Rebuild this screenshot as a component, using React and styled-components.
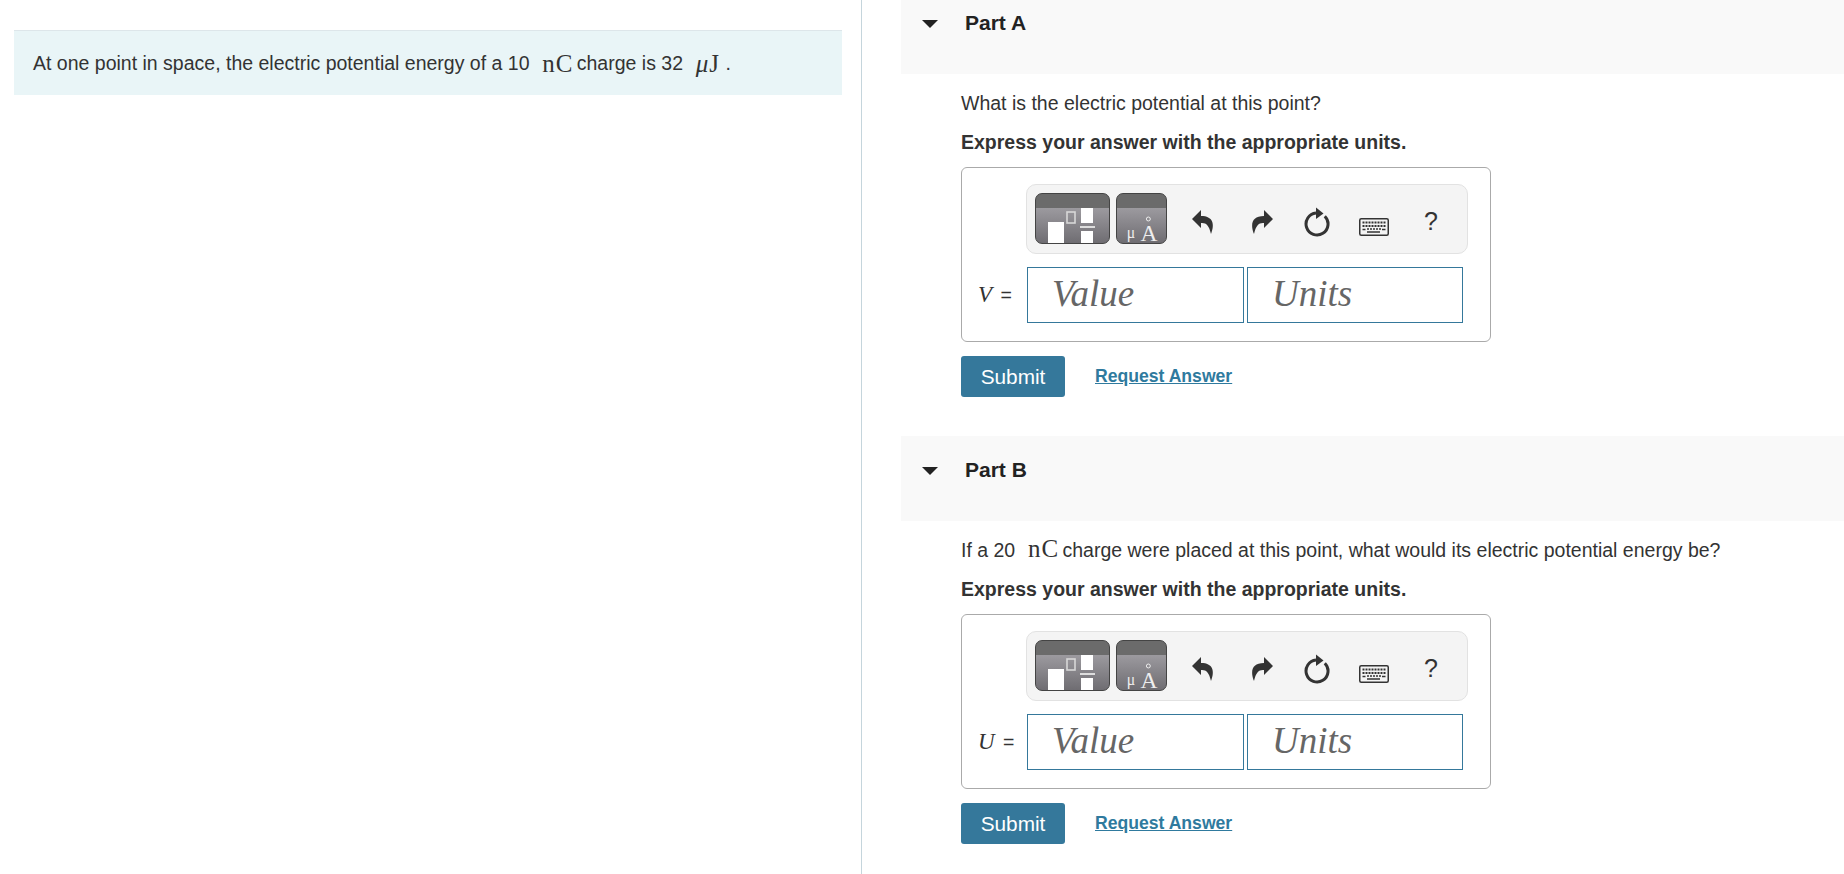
import React from 'react';
import styled, { createGlobalStyle } from 'styled-components';

const GlobalStyle = createGlobalStyle`
  html, body {
    margin: 0;
    padding: 0;
    background: #fff;
    overflow: hidden;
  }
  body {
    font-family: "Liberation Sans", Arial, sans-serif;
    color: #333;
  }
`;

const Page = styled.div`
  display: flex;
  width: 1844px;
  height: 874px;
  overflow: hidden;
`;

const LeftPane = styled.div`
  width: 862px;
  height: 100%;
  flex: none;
  box-sizing: border-box;
  padding: 30px 19px 0 14px;
  border-right: 1px solid #c5d5dc;
`;

const Intro = styled.div`
  height: 65px;
  box-sizing: border-box;
  display: flex;
  align-items: center;
  padding: 1px 19px 0;
  background: #e9f5f7;
  border-top: 1px solid #dde6ea;
  font-size: 19.5px;
  white-space: pre;
`;

const RightPane = styled.div`
  flex: 1;
  padding-left: 39px;
  margin-top: -11px;
`;

const PartHeader = styled.div`
  height: 85px;
  box-sizing: border-box;
  display: flex;
  align-items: flex-start;
  padding: 22px 0 0 21px;
  background: #f9f9f9;
`;

const Caret = styled.span`
  width: 0;
  height: 0;
  margin: 9px 27px 0 0;
  border-left: 8px solid transparent;
  border-right: 8px solid transparent;
  border-top: 8px solid #222;
`;

const PartTitle = styled.h2`
  margin: 0;
  font-size: 21px;
  line-height: 24px;
  font-weight: 700;
  color: #222;
`;

const PartBody = styled.div`
  padding: 16px 0 39px 60px;
`;

const Question = styled.p`
  margin: 0;
  font-size: 19.5px;
  line-height: 26px;
  white-space: pre;
`;

const Instruction = styled.p`
  margin: 13px 0 0;
  font-size: 19.5px;
  line-height: 26px;
  font-weight: 700;
`;

const MathText = styled.span`
  font-family: "Liberation Serif", "Times New Roman", serif;
  font-size: 25px;
  line-height: 0;
  letter-spacing: 1px;
  margin-right: ${(p) => (p.$tight ? '-2px' : '0')};
  font-style: ${(p) => (p.$italic ? 'italic' : 'normal')};
`;

const AnswerBox = styled.div`
  width: 530px;
  height: 175px;
  box-sizing: border-box;
  margin-top: 12px;
  padding: 16px 0 0 65px;
  border: 1px solid #aaa;
  border-radius: 6px;
`;

const Toolbar = styled.div`
  width: 442px;
  height: 70px;
  margin-left: -1px;
  box-sizing: border-box;
  display: flex;
  align-items: flex-start;
  padding: 8px 0 0 8px;
  background: #f4f4f4;
  border: 1px solid #e2e2e2;
  border-radius: 10px;
`;

const PaletteButton = styled.div`
  width: ${(p) => p.$width}px;
  height: 51px;
  flex: none;
  margin-right: ${(p) => p.$gap}px;
  box-sizing: border-box;
  border: 1px solid #444;
  border-radius: 7px;
  background: linear-gradient(#6b6b6b 0, #6b6b6b 14px, #9c9a9f 14px, #6f6d72 100%);
`;

const PaletteSvg = styled.svg`
  display: block;
  width: 100%;
  height: 100%;
  overflow: visible;
`;

const ToolSlot = styled.div`
  width: ${(p) => p.$width}px;
  height: 40px;
  margin-top: ${(p) => p.$top}px;
  flex: none;
  display: flex;
  align-items: center;
  justify-content: center;
  color: #333;
`;

const HelpMark = styled.span`
  font-size: 25px;
  color: #333;
`;

const FieldRow = styled.div`
  position: relative;
  display: flex;
  gap: 3px;
  margin-top: 13px;
`;

const Symbol = styled.span`
  position: absolute;
  left: -49px;
  top: 13px;
  font-size: 19.5px;
  line-height: 30px;
  white-space: pre;
`;

const SymbolLetter = styled.span`
  margin-right: 3px;
  font-family: "Liberation Serif", serif;
  font-style: italic;
  font-size: 23px;
`;

const Field = styled.div`
  width: ${(p) => p.$width}px;
  height: 56px;
  box-sizing: border-box;
  padding-left: 24px;
  border: 1px solid #35789b;
  font-family: "Liberation Serif", serif;
  font-style: italic;
  font-size: 37px;
  line-height: 52px;
  color: #666;
`;

const Actions = styled.div`
  display: flex;
  align-items: center;
  margin-top: 14px;
`;

const SubmitButton = styled.button`
  width: 104px;
  height: 41px;
  padding: 0;
  border: 0;
  border-radius: 3px;
  background: #35789b;
  color: #fff;
  font-family: inherit;
  font-size: 20.8px;
`;

const RequestLink = styled.a`
  margin-left: 30px;
  font-size: 17.6px;
  font-weight: 700;
  color: #2f7a9e;
  text-decoration: underline;
`;

const MatrixIcon = () => (
  <PaletteSvg viewBox="0 0 73 49">
    <rect x="12" y="28" width="16" height="21" fill="#fff" />
    <rect x="31" y="18" width="8" height="11" fill="none" stroke="#d8d8d8" strokeWidth="1.6" />
    <rect x="45" y="14" width="12" height="15" fill="#fff" />
    <rect x="44" y="32" width="15" height="2" fill="#ddd" />
    <rect x="45" y="37" width="12" height="12" fill="#fff" />
  </PaletteSvg>
);

const UnitsIcon = () => (
  <PaletteSvg viewBox="0 0 50 49">
    <text x="10" y="44" fontFamily="Liberation Serif, serif" fontSize="16" fill="#eee">μ</text>
    <text x="24" y="47" fontFamily="Liberation Serif, serif" fontSize="24" fill="#eee">A</text>
    <circle cx="32" cy="25" r="2" fill="none" stroke="#eee" strokeWidth="1" />
  </PaletteSvg>
);

const UndoIcon = ({ flip }) => (
  <svg width="24" height="26" viewBox="0 0 24 26" style={flip ? { transform: 'scaleX(-1)' } : undefined}>
    <path
      d="M10 1 L1 10 L10 19 V14 C15 13.5 18 16 20 25 C24 15 22 7 10 7 Z"
      fill="#333"
    />
  </svg>
);

const ReloadIcon = () => (
  <svg width="28" height="30" viewBox="0 0 28 30">
    <path d="M13 6.05 A11 11 0 1 0 21.8 9.2" fill="none" stroke="#333" strokeWidth="3" />
    <path d="M13 0.5 L20.5 6.5 L13 12 Z" fill="#333" />
  </svg>
);

const KeyboardIcon = () => (
  <svg width="30" height="18" viewBox="0 0 30 18">
    <rect x="0.75" y="0.75" width="28.5" height="16.5" rx="1.5" fill="#f4f4f4" stroke="#333" strokeWidth="1.5" />
    <path
      d="M3.5 4.5h23M3.5 8h23"
      stroke="#333"
      strokeWidth="2"
      strokeDasharray="2 1"
    />
    <path d="M3.5 11.5h3M8 14h13M23 11.5h3.5" stroke="#333" strokeWidth="1.6" />
    <path d="M8 11h15" stroke="#333" strokeWidth="1.5" strokeDasharray="2 1" />
  </svg>
);

const Part = ({ title, question, symbol }) => (
  <section>
    <PartHeader>
      <Caret />
      <PartTitle>{title}</PartTitle>
    </PartHeader>
    <PartBody>
      <Question>{question}</Question>
      <Instruction>Express your answer with the appropriate units.</Instruction>
      <AnswerBox>
        <Toolbar>
          <PaletteButton $width={75} $gap={6}><MatrixIcon /></PaletteButton>
          <PaletteButton $width={51} $gap={6}><UnitsIcon /></PaletteButton>
          <ToolSlot $width={60} $top={9}><UndoIcon /></ToolSlot>
          <ToolSlot $width={58} $top={9}><UndoIcon flip /></ToolSlot>
          <ToolSlot $width={52} $top={9}><ReloadIcon /></ToolSlot>
          <ToolSlot $width={61} $top={14}><KeyboardIcon /></ToolSlot>
          <ToolSlot $width={54} $top={8}><HelpMark>?</HelpMark></ToolSlot>
        </Toolbar>
        <FieldRow>
          <Symbol><SymbolLetter>{symbol}</SymbolLetter> =</Symbol>
          <Field $width={217}>Value</Field>
          <Field $width={216}>Units</Field>
        </FieldRow>
      </AnswerBox>
      <Actions>
        <SubmitButton>Submit</SubmitButton>
        <RequestLink href="#">Request Answer</RequestLink>
      </Actions>
    </PartBody>
  </section>
);

export default function App() {
  return (
    <>
      <GlobalStyle />
      <Page>
        <LeftPane>
          <Intro>
            At one point in space, the electric potential energy of a 10 <MathText $tight> nC</MathText> charge is 32 <MathText $italic> μ</MathText><MathText>J</MathText> .
          </Intro>
        </LeftPane>
        <RightPane>
          <Part title="Part A" symbol="V" question="What is the electric potential at this point?" />
          <Part
            title="Part B"
            symbol="U"
            question={<>If a 20 <MathText $tight> nC</MathText> charge were placed at this point, what would its electric potential energy be?</>}
          />
        </RightPane>
      </Page>
    </>
  );
}
